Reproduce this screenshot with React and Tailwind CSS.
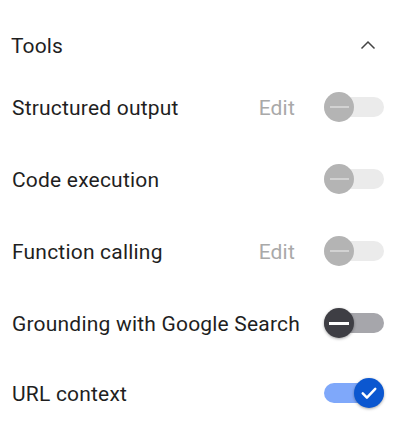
import React from "react";

function Toggle({ state }) {
  if (state === "on") {
    return (
      <div className="relative w-[60px] h-[30px] flex items-center">
        <div className="w-[60px] h-[20px] rounded-full bg-[#7fa8fa]" />
        <div className="absolute right-0 top-0 w-[30px] h-[30px] rounded-full bg-[#0b57d0] shadow-[0_1px_3px_rgba(0,0,0,0.35)] flex items-center justify-center">
          <svg width="20" height="20" viewBox="0 0 24 24" fill="none" stroke="#fff" strokeWidth="3" strokeLinecap="round" strokeLinejoin="round">
            <path d="M4.5 12.5l5 5L19.5 7" />
          </svg>
        </div>
      </div>
    );
  }
  if (state === "off") {
    return (
      <div className="relative w-[60px] h-[30px] flex items-center">
        <div className="w-[60px] h-[20px] rounded-full bg-[#a6a6ab]" />
        <div className="absolute left-0 top-0 w-[30px] h-[30px] rounded-full bg-[#3e3e44] shadow-[0_1px_3px_rgba(0,0,0,0.35)] flex items-center justify-center">
          <div className="w-[20px] h-[3px] bg-white" />
        </div>
      </div>
    );
  }
  return (
    <div className="relative w-[60px] h-[30px] flex items-center">
      <div className="w-[60px] h-[20px] rounded-full bg-[#ebebeb]" />
      <div className="absolute left-0 top-0 w-[30px] h-[30px] rounded-full bg-[#b4b4b4] flex items-center justify-center">
        <div className="w-[19px] h-[2px] bg-[#d2d2d2]" />
      </div>
    </div>
  );
}

function Row({ label, edit, state, className = "h-[72px]" }) {
  return (
    <div className={"flex items-center pl-[12px] pr-[28px] " + className}>
      <span className="flex-1 pt-[3px] text-[21px] tracking-[0.2px] text-[#1f1f1f]">{label}</span>
      {edit && <span className="pt-[3px] text-[21px] tracking-[0.2px] text-[#a9a9a9] mr-[29px]">Edit</span>}
      <Toggle state={state} />
    </div>
  );
}

export default function App() {
  return (
    <div className="w-[412px] h-[440px] bg-white" style={{ fontFamily: "Roboto, 'Noto Sans', sans-serif" }}>
      <div className="pt-[21px] h-[69px] pl-[11px] pr-[36px] flex items-start">
        <div className="h-[48px] flex-1 flex items-center justify-between">
          <span className="pt-[3px] text-[21px] tracking-[0.1px] text-[#1f1f1f]">Tools</span>
          <svg width="16" height="10" viewBox="0 0 16 10" fill="none" stroke="#444" strokeWidth="1.5">
            <path d="M1.5 8.5L8 2l6.5 6.5" />
          </svg>
        </div>
      </div>
      <div className="pt-[2px]">
        <Row label="Structured output" edit state="disabled" />
        <Row label="Code execution" state="disabled" />
        <Row label="Function calling" edit state="disabled" />
        <Row label="Grounding with Google Search" state="off" />
        <Row label="URL context" state="on" className="h-[68px]" />
      </div>
    </div>
  );
}
